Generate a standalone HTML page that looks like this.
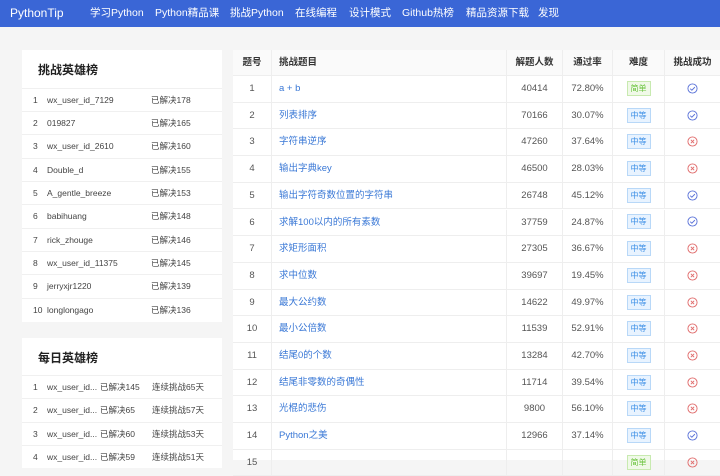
<!DOCTYPE html>
<html><head><meta charset="utf-8"><style>
*{margin:0;padding:0;box-sizing:border-box}
body{width:720px;height:460px;overflow:hidden;background:#f5f5f5;font-family:"Liberation Sans","Noto Sans CJK SC",sans-serif;color:#333;position:relative}
.nav{position:absolute;left:0;top:0;width:720px;height:27px;background:#3a66d6;color:#fff;font-size:10.5px}
.nav span{position:absolute;top:0;line-height:27px;white-space:nowrap}
.card{position:absolute;left:22px;width:200px;background:#fff}
.card h3{font-size:12px;font-weight:bold;color:#222;position:absolute;left:16px;line-height:16px}
.li{position:absolute;left:0;width:200px;height:23px;border-top:1px solid #f0f0f0;font-size:8.5px;color:#444}
.li span{position:absolute;top:0;line-height:23px;white-space:nowrap}
.tbl{position:absolute;left:233px;top:50px;width:487px;height:410px;background:#fff}
.row{position:absolute;left:0;width:487px;height:26.7px;border-bottom:1px solid #eee;font-size:9.5px;color:#555}
.row div{position:absolute;top:0;height:100%;line-height:26px;border-right:1px solid #eee;text-align:center;white-space:nowrap}
.c1{left:0;width:39px}.c2{left:39px;width:235px;text-align:left!important;padding-left:7px;color:#3a78d6}
.c3{left:274px;width:56px}.c4{left:330px;width:50px}.c5{left:380px;width:52px}.c6{left:432px;width:55px;border-right:none!important}
.hd div{font-weight:600;color:#333;font-size:9.5px}
.hd{height:26px;background:#fafafa}
.tag{display:inline-block;font-size:8px;line-height:13px;padding:0 3px;border:1px solid #b8d8f8;background:#e8f3ff;color:#3a8ee6;vertical-align:middle}
.tag.g{border-color:#c8eab0;background:#f0f9e8;color:#67c23a}
svg{vertical-align:middle}
</style></head><body>
<div class="nav">
<span style="left:10px;font-size:12px">PythonTip</span>
<span style="left:90px">学习Python</span>
<span style="left:155px">Python精品课</span>
<span style="left:230px">挑战Python</span>
<span style="left:295px">在线编程</span>
<span style="left:349px">设计模式</span>
<span style="left:402px">Github热榜</span>
<span style="left:466px">精品资源下载</span>
<span style="left:538px">发现</span>
</div>

<div class="card" style="top:50px;height:272px">
<h3 style="top:12px">挑战英雄榜</h3>
<div class="li" style="top:38px"><span style="left:11px">1</span><span style="left:25px">wx_user_id_7129</span><span style="left:129px">已解决178</span></div>
<div class="li" style="top:61px"><span style="left:11px">2</span><span style="left:25px">019827</span><span style="left:129px">已解决165</span></div>
<div class="li" style="top:84px"><span style="left:11px">3</span><span style="left:25px">wx_user_id_2610</span><span style="left:129px">已解决160</span></div>
<div class="li" style="top:108px"><span style="left:11px">4</span><span style="left:25px">Double_d</span><span style="left:129px">已解决155</span></div>
<div class="li" style="top:131px"><span style="left:11px">5</span><span style="left:25px">A_gentle_breeze</span><span style="left:129px">已解决153</span></div>
<div class="li" style="top:154px"><span style="left:11px">6</span><span style="left:25px">babihuang</span><span style="left:129px">已解决148</span></div>
<div class="li" style="top:178px"><span style="left:11px">7</span><span style="left:25px">rick_zhouge</span><span style="left:129px">已解决146</span></div>
<div class="li" style="top:201px"><span style="left:11px">8</span><span style="left:25px">wx_user_id_11375</span><span style="left:129px">已解决145</span></div>
<div class="li" style="top:224px"><span style="left:11px">9</span><span style="left:25px">jerryxjr1220</span><span style="left:129px">已解决139</span></div>
<div class="li" style="top:248px"><span style="left:11px">10</span><span style="left:25px">longlongago</span><span style="left:129px">已解决136</span></div>
</div>

<div class="card" style="top:338px;height:130px">
<h3 style="top:12px">每日英雄榜</h3>
<div class="li" style="top:37px"><span style="left:11px">1</span><span style="left:25px">wx_user_id...</span><span style="left:78px">已解决145</span><span style="left:130px">连续挑战65天</span></div>
<div class="li" style="top:60px"><span style="left:11px">2</span><span style="left:25px">wx_user_id...</span><span style="left:78px">已解决65</span><span style="left:130px">连续挑战57天</span></div>
<div class="li" style="top:84px"><span style="left:11px">3</span><span style="left:25px">wx_user_id...</span><span style="left:78px">已解决60</span><span style="left:130px">连续挑战53天</span></div>
<div class="li" style="top:107px"><span style="left:11px">4</span><span style="left:25px">wx_user_id...</span><span style="left:78px">已解决59</span><span style="left:130px">连续挑战51天</span></div>
</div>

<div class="tbl">
<div class="row hd" style="top:0"><div class="c1">题号</div><div class="c2" style="color:#333">挑战题目</div><div class="c3">解题人数</div><div class="c4">通过率</div><div class="c5">难度</div><div class="c6">挑战成功</div></div>
</div>
<script>
var d=[["a + b",40414,"72.80%",1,1],["列表排序",70166,"30.07%",0,1],["字符串逆序",47260,"37.64%",0,0],["输出字典key",46500,"28.03%",0,0],["输出字符奇数位置的字符串",26748,"45.12%",0,1],["求解100以内的所有素数",37759,"24.87%",0,1],["求矩形面积",27305,"36.67%",0,0],["求中位数",39697,"19.45%",0,0],["最大公约数",14622,"49.97%",0,0],["最小公倍数",11539,"52.91%",0,0],["结尾0的个数",13284,"42.70%",0,0],["结尾非零数的奇偶性",11714,"39.54%",0,0],["光棍的悲伤",9800,"56.10%",0,0],["Python之美",12966,"37.14%",0,1],["",'','',1,0]];
var ok='<svg width="11" height="11" viewBox="0 0 12 12"><circle cx="6" cy="6" r="5" fill="none" stroke="#5a72d8" stroke-width="1"/><path d="M3.5 6.2l1.8 1.7 3.3-3.4" fill="none" stroke="#5a72d8" stroke-width="1"/></svg>';
var no='<svg width="11" height="11" viewBox="0 0 12 12"><circle cx="6" cy="6" r="5" fill="none" stroke="#e06a6a" stroke-width="1"/><path d="M4.2 4.2l3.6 3.6M7.8 4.2l-3.6 3.6" stroke="#e06a6a" stroke-width="1"/></svg>';
var h='';
d.forEach(function(r,i){var t=26+i*26.7;
h+='<div class="row" style="top:'+t+'px"><div class="c1">'+(i+1)+'</div><div class="c2">'+r[0]+'</div><div class="c3">'+r[1]+'</div><div class="c4">'+r[2]+'</div><div class="c5"><span class="tag'+(r[3]?' g':'')+'">'+(r[3]?'简单':'中等')+'</span></div><div class="c6">'+(r[4]?ok:no)+'</div></div>';});
document.querySelector('.tbl').insertAdjacentHTML('beforeend',h);
</script>
</body></html>
